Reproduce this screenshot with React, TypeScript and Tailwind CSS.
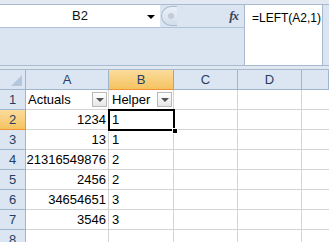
const COLS = [
  { key: 'A', w: 'w-[83px]' },
  { key: 'B', w: 'w-[65px]' },
  { key: 'C', w: 'w-[64px]' },
  { key: 'D', w: 'w-[64px]' },
  { key: 'E', w: 'w-[27px]' },
];

const ROWS: { n: number; a: string; b: string; head?: boolean }[] = [
  { n: 1, a: 'Actuals', b: 'Helper', head: true },
  { n: 2, a: '1234', b: '1' },
  { n: 3, a: '13', b: '1' },
  { n: 4, a: '21316549876', b: '2' },
  { n: 5, a: '2456', b: '2' },
  { n: 6, a: '34654651', b: '3' },
  { n: 7, a: '3546', b: '3' },
  { n: 8, a: '', b: '' },
];

function FilterButton() {
  return (
    <div className="absolute right-[1px] top-[2px] w-[15px] h-[15px] border border-[#b9b9b9] bg-gradient-to-b from-[#ffffff] to-[#e6e6e6] flex items-center justify-center">
      <div className="w-0 h-0 border-l-[4px] border-r-[4px] border-t-[4px] border-l-transparent border-r-transparent border-t-[#555]" />
    </div>
  );
}

export default function App() {
  return (
    <div className="w-[329px] h-[242px] overflow-hidden bg-white relative font-['Liberation_Sans',Arial,sans-serif] text-[13px] text-black">
      {/* top strip */}
      <div className="h-[5px] bg-[#e2e9f2] border-b border-[#a9bad0]" />

      {/* formula bar */}
      <div className="flex h-[60px] bg-[#dbe5f1]">
        <div className="w-[244px] flex flex-col">
          <div className="flex h-[23px] border-b border-[#b1c3d9]">
            <div className="w-[160px] bg-white relative flex items-center justify-center text-[13px] text-[#111]">
              B2
              <div className="absolute left-[147px] top-[10px] w-0 h-0 border-l-[4px] border-r-[4px] border-t-[4px] border-l-transparent border-r-transparent border-t-black" />
            </div>
            <div className="flex-1 flex items-center">
              <div className="ml-[1px] w-[16px] h-[20px] rounded-l-full border-l border-t border-b border-[#a9bad0] bg-gradient-to-b from-[#e9eff7] to-[#d3deec] flex items-center pl-[6px]">
                <div className="w-[6px] h-[6px] rounded-full bg-[#c3cbd6]" />
              </div>
              <div className="ml-auto mr-[6px] font-['Liberation_Serif',serif] italic font-bold text-[13px] text-[#3a4658] tracking-[-1px]">
                fx
              </div>
            </div>
          </div>
        </div>
        <div className="w-[79px] bg-white border-l border-r border-[#a9bad0] pl-[7px] pt-[4px] text-[12px] whitespace-nowrap overflow-hidden">
          =LEFT(A2,1)
        </div>
        <div className="flex-1" />
      </div>

      {/* separator strip */}
      <div className="h-[5px] bg-[#dfe7f1] border-t border-b border-[#a9bad0]" />

      {/* column headers */}
      <div className="flex h-[20px] bg-[#dce6f2] text-[#253f63]">
        <div className="w-[26px] border-r border-b border-[#9eb6ce] relative">
          <div className="absolute right-[3px] bottom-[3px] w-0 h-0 border-b-[11px] border-l-[11px] border-b-[#b5c7db] border-l-transparent" />
        </div>
        {COLS.map((c) => (
          <div
            key={c.key}
            className={
              c.key === 'B'
                ? `${c.w} flex items-center justify-center border-r border-b border-[#f29436] bg-gradient-to-b from-[#fbdc9b] to-[#f5c35f]`
                : `${c.w} flex items-center justify-center border-r border-b border-[#9eb6ce]`
            }
          >
            {c.key === 'E' ? '' : c.key}
          </div>
        ))}
      </div>

      {/* rows */}
      {ROWS.map((r) => (
        <div key={r.n} className="flex h-[20px]">
          <div
            className={
              r.n === 2
                ? 'w-[26px] flex items-center justify-center border-r border-b border-[#f29436] bg-gradient-to-b from-[#fbdc9b] to-[#f5c35f] text-[#253f63]'
                : 'w-[26px] flex items-center justify-center border-r border-b border-[#9eb6ce] bg-[#dce6f2] text-[#253f63]'
            }
          >
            {r.n}
          </div>
          <div
            className={`w-[83px] relative flex items-center border-r border-b border-[#d4d4d4] ${
              r.head ? 'justify-start pl-[2px]' : 'justify-end pr-[2px]'
            }`}
          >
            {r.a}
            {r.head && <FilterButton />}
          </div>
          <div className="w-[65px] relative flex items-center pl-[3px] border-r border-b border-[#d4d4d4]">
            {r.b}
            {r.head && <FilterButton />}
          </div>
          <div className="w-[64px] border-r border-b border-[#d4d4d4]" />
          <div className="w-[64px] border-r border-b border-[#d4d4d4]" />
          <div className="w-[27px] border-b border-[#d4d4d4]" />
        </div>
      ))}

      {/* active cell B2 */}
      <div className="absolute left-[108px] top-[109px] w-[67px] h-[22px] border-2 border-black pointer-events-none" />
      <div className="absolute left-[172px] top-[128px] w-[6px] h-[6px] bg-black border border-white" />
    </div>
  );
}
